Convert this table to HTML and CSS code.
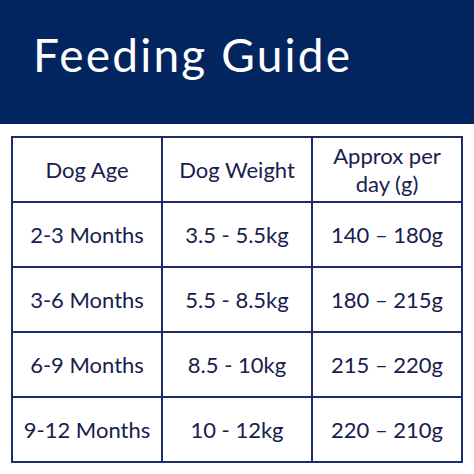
FILE: index.html
```html
<!DOCTYPE html>
<html lang="en">
<head>
	<meta charset="UTF-8">
	<title>Feeding Guide</title>
	<link rel="stylesheet" href="styles.css">
</head>
<body>
	<header class="banner">
		<h1>Feeding Guide</h1>
	</header>
	<table class="guide">
		<tr>
			<th>Dog Age</th>
			<th>Dog Weight</th>
			<th>Approx per<br>day (g)</th>
		</tr>
		<tr>
			<td>2-3 Months</td>
			<td>3.5 - 5.5kg</td>
			<td>140 – 180g</td>
		</tr>
		<tr>
			<td>3-6 Months</td>
			<td>5.5 - 8.5kg</td>
			<td>180 – 215g</td>
		</tr>
		<tr>
			<td>6-9 Months</td>
			<td>8.5 - 10kg</td>
			<td>215 – 220g</td>
		</tr>
		<tr>
			<td>9-12 Months</td>
			<td>10 - 12kg</td>
			<td>220 – 210g</td>
		</tr>
	</table>
</body>
</html>
```

FILE: styles.css
```css
html {
	box-sizing: border-box;
}

*, *:before, *:after {
	box-sizing: inherit;
}

body {
	margin: 0;
	background: #fff;
	font-family: Lato, "Noto Sans", sans-serif;
	color: #17204d;
}

.banner {
	background: #02245f;
	height: 124px;
	padding: 32px 0 0 33px;
}

.banner h1 {
	margin: 0;
	color: #fff;
	font-weight: 400;
	font-size: 46px;
	line-height: 46px;
	letter-spacing: 2.2px;
}

.guide {
	border-collapse: collapse;
	margin: 12px 0 0 11px;
	width: 452px;
	table-layout: fixed;
}

.guide th,
.guide td {
	border: 2px solid #1d2b6a;
	text-align: center;
	font-weight: 400;
	font-size: 22px;
	height: 65px;
	padding: 0;
}

.guide th {
	line-height: 28px;
}
```
